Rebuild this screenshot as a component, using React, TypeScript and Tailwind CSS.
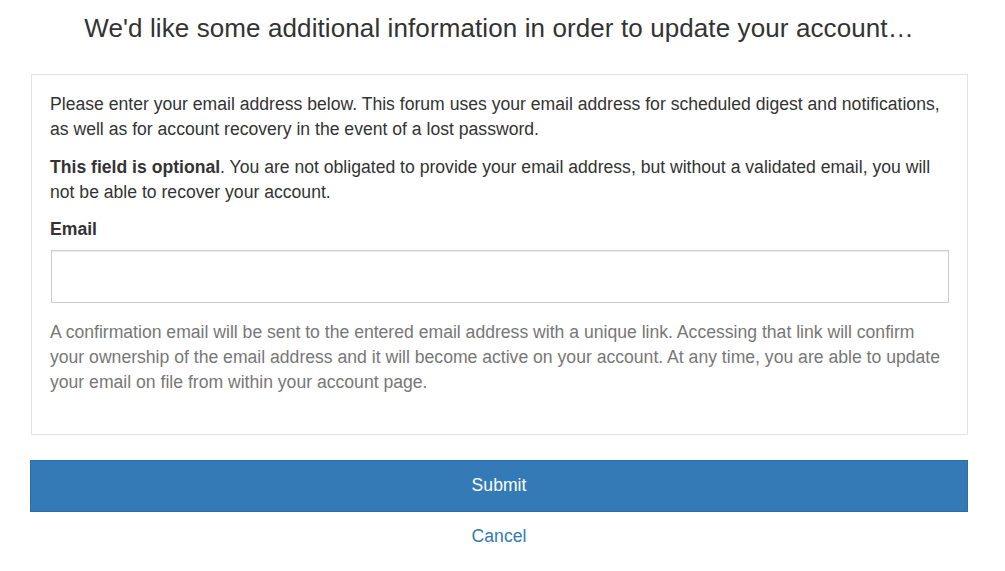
export default function App() {
  return (
    <div className="min-h-screen bg-white pl-[30px] pr-[37px] font-['Liberation_Sans',Arial,sans-serif] text-[#333]">
      <h1 className="pt-[13px] text-center text-[26px] leading-[30px] tracking-[0.1px] text-[#333]">
        We'd like some additional information in order to update your account…
      </h1>

      <div className="mt-[31px] ml-px border border-[#e3e3e3] px-[18px] pt-[17px] pb-[39px] text-[17.6px] leading-[25px]">
        <p>
          Please enter your email address below. This forum uses your email address for scheduled digest and
          notifications, as well as for account recovery in the event of a lost password.
        </p>
        <p className="mt-[13px]">
          <strong className="font-bold">This field is optional</strong>. You are not obligated to provide your email
          address, but without a validated email, you will not be able to recover your account.
        </p>
        <label className="mt-[12px] block font-bold">Email</label>
        <input
          type="email"
          className="mt-[8px] ml-px block h-[53px] w-[calc(100%-1px)] border border-[#ccc] bg-white px-3 shadow-[inset_0_1px_1px_rgba(0,0,0,0.075)] outline-none"
        />
        <p className="mt-[17px] text-[#777]">
          A confirmation email will be sent to the entered email address with a unique link. Accessing that link will
          confirm your ownership of the email address and it will become active on your account. At any time, you are
          able to update your email on file from within your account page.
        </p>
      </div>

      <button
        type="button"
        className="mt-[25px] block h-[52px] w-full border border-[#2e6da4] bg-[#337ab7] pb-[2px] text-[17.6px] text-white"
      >
        Submit
      </button>
      <div className="mt-[12px] text-center">
        <a href="#" className="text-[17.6px] leading-[25px] text-[#337ab7]">
          Cancel
        </a>
      </div>
    </div>
  );
}
